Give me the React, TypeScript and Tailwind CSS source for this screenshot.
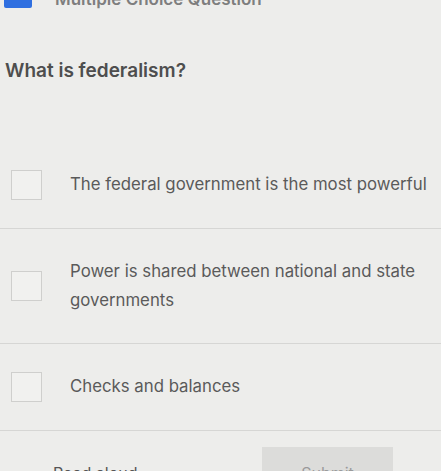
import React from 'react';

const options = [
  'The federal government is the most powerful',
  'Power is shared between national and state governments',
  'Checks and balances',
];

const OptionRow: React.FC<{ label: string }> = ({ label }) => (
  <label className="flex items-center border-b border-[#d6d6d4] py-[28px] pl-[11px] pr-[6px]">
    <span className="w-[31px] h-[30px] shrink-0 border border-[#cfcfcd] bg-[#f1f1ef]" />
    <span className="ml-[28px] text-[16.8px] leading-[29px] text-[#5a5a5a]">{label}</span>
  </label>
);

export default function App() {
  return (
    <div
      className="w-[441px] h-[471px] overflow-hidden bg-[#ededeb]"
      style={{ fontFamily: 'Inter, "Open Sans", sans-serif' }}
    >
      <div className="flex items-end gap-[23px] pl-[4px] -mt-[16px] h-[24px]">
        <span className="w-[28px] h-[24px] rounded-[2px] bg-[#2f6fe0]" />
        <span className="text-[17px] leading-none font-semibold text-[#7e7e7e]">
          Multiple Choice Question
        </span>
      </div>

      <h1 className="mt-[49px] pl-[5px] text-[19px] font-semibold text-[#4e4e4e]">What is federalism?</h1>

      <div className="mt-[56px]">
        {options.map((o) => (
          <OptionRow key={o} label={o} />
        ))}
      </div>

      <div className="flex items-start justify-between mt-[16px] pl-[53px] pr-[48px]">
        <span className="mt-[14px] text-[16px] leading-[24px] text-[#555]">Read aloud</span>
        <button className="w-[131px] h-[40px] pt-[14px] flex justify-center items-start bg-[#dcdcda] text-[16px] leading-[24px] text-[#9a9a9a]">
          Submit
        </button>
      </div>
    </div>
  );
}
